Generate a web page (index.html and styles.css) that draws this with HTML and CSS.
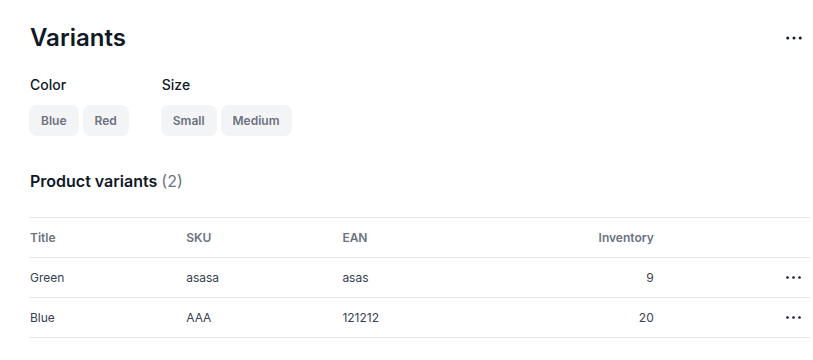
FILE: index.html
```html
<!DOCTYPE html>
<html lang="en">
<head>
  <meta charset="UTF-8">
  <meta name="viewport" content="width=device-width, initial-scale=1.0">
  <title>Variants</title>
  <link rel="stylesheet" href="styles.css">
</head>
<body>

  <div class="card">
    <div class="card-header">
      <h1>Variants</h1>
      <button class="dots-button">
        <svg width="16" height="4" viewBox="0 0 16 4"><circle cx="1.75" cy="2" r="1.5"/><circle cx="8" cy="2" r="1.5"/><circle cx="14.25" cy="2" r="1.5"/></svg>
      </button>
    </div>

    <div class="options">
      <div class="option">
        <div class="option-label">Color</div>
        <div class="chips">
          <span class="chip">Blue</span>
          <span class="chip">Red</span>
        </div>
      </div>
      <div class="option">
        <div class="option-label">Size</div>
        <div class="chips">
          <span class="chip">Small</span>
          <span class="chip">Medium</span>
        </div>
      </div>
    </div>

    <h2 class="section-title">Product variants <span class="count">(2)</span></h2>

    <table class="variants-table">
      <thead>
        <tr>
          <th>Title</th>
          <th>SKU</th>
          <th>EAN</th>
          <th class="num">Inventory</th>
          <th></th>
        </tr>
      </thead>
      <tbody>
        <tr>
          <td>Green</td>
          <td>asasa</td>
          <td>asas</td>
          <td class="num">9</td>
          <td class="actions">
            <button class="dots-button small">
              <svg width="15" height="3" viewBox="0 0 15 3"><circle cx="1.5" cy="1.5" r="1.3"/><circle cx="7.5" cy="1.5" r="1.3"/><circle cx="13.5" cy="1.5" r="1.3"/></svg>
            </button>
          </td>
        </tr>
        <tr>
          <td>Blue</td>
          <td>AAA</td>
          <td>121212</td>
          <td class="num">20</td>
          <td class="actions">
            <button class="dots-button small">
              <svg width="15" height="3" viewBox="0 0 15 3"><circle cx="1.5" cy="1.5" r="1.3"/><circle cx="7.5" cy="1.5" r="1.3"/><circle cx="13.5" cy="1.5" r="1.3"/></svg>
            </button>
          </td>
        </tr>
      </tbody>
    </table>
  </div>

</body>
</html>
```

FILE: styles.css
```css
body {
  margin: 0;
  padding: 0;
  background-color: #fff;
  font-family: 'Inter', 'Liberation Sans', sans-serif;
  color: #111827;
}
.card {
  padding: 22px 3px 0 29px;
}
.card-header {
  display: flex;
  justify-content: space-between;
  align-items: center;
}
h1 {
  margin: 0 0 0 1px;
  font-size: 24px;
  line-height: 32px;
  font-weight: 600;
}
.dots-button {
  border: none;
  background: none;
  padding: 0;
  margin-right: 8px;
  display: flex;
  align-items: center;
  cursor: pointer;
}
.dots-button svg {
  fill: #111827;
}
.dots-button.small {
  margin-right: 0;
}
.options {
  display: flex;
  gap: 32px;
  margin-top: 21px;
}
.option-label {
  font-size: 14px;
  line-height: 20px;
  font-weight: 500;
  margin-left: 1px;
  margin-bottom: 10px;
}
.chips {
  display: flex;
  gap: 4px;
}
.chip {
  display: inline-block;
  height: 31px;
  line-height: 31px;
  padding: 0 12px;
  font-size: 12px;
  font-weight: 600;
  color: #6b7280;
  background-color: #f3f4f6;
  border-radius: 8px;
}
.section-title {
  margin: 33px 0 0 1px;
  font-size: 16px;
  line-height: 24px;
  font-weight: 600;
}
.count {
  font-weight: 400;
  color: #6b7280;
}
.variants-table {
  width: 100%;
  margin-top: 24px;
  border-collapse: collapse;
  table-layout: fixed;
  font-size: 12px;
}
.variants-table th,
.variants-table td {
  height: 39px;
  padding: 0 0 0 1px;
  text-align: left;
  border-top: 1px solid #e5e7eb;
  border-bottom: 1px solid #e5e7eb;
}
.variants-table th {
  font-weight: 600;
  color: #6b7280;
}
.variants-table td {
  color: #374151;
}
.variants-table .num {
  text-align: right;
  padding: 0;
}
.variants-table .actions {
  padding: 0 9px 0 0;
}
.variants-table .actions .dots-button {
  margin-left: auto;
}
```
